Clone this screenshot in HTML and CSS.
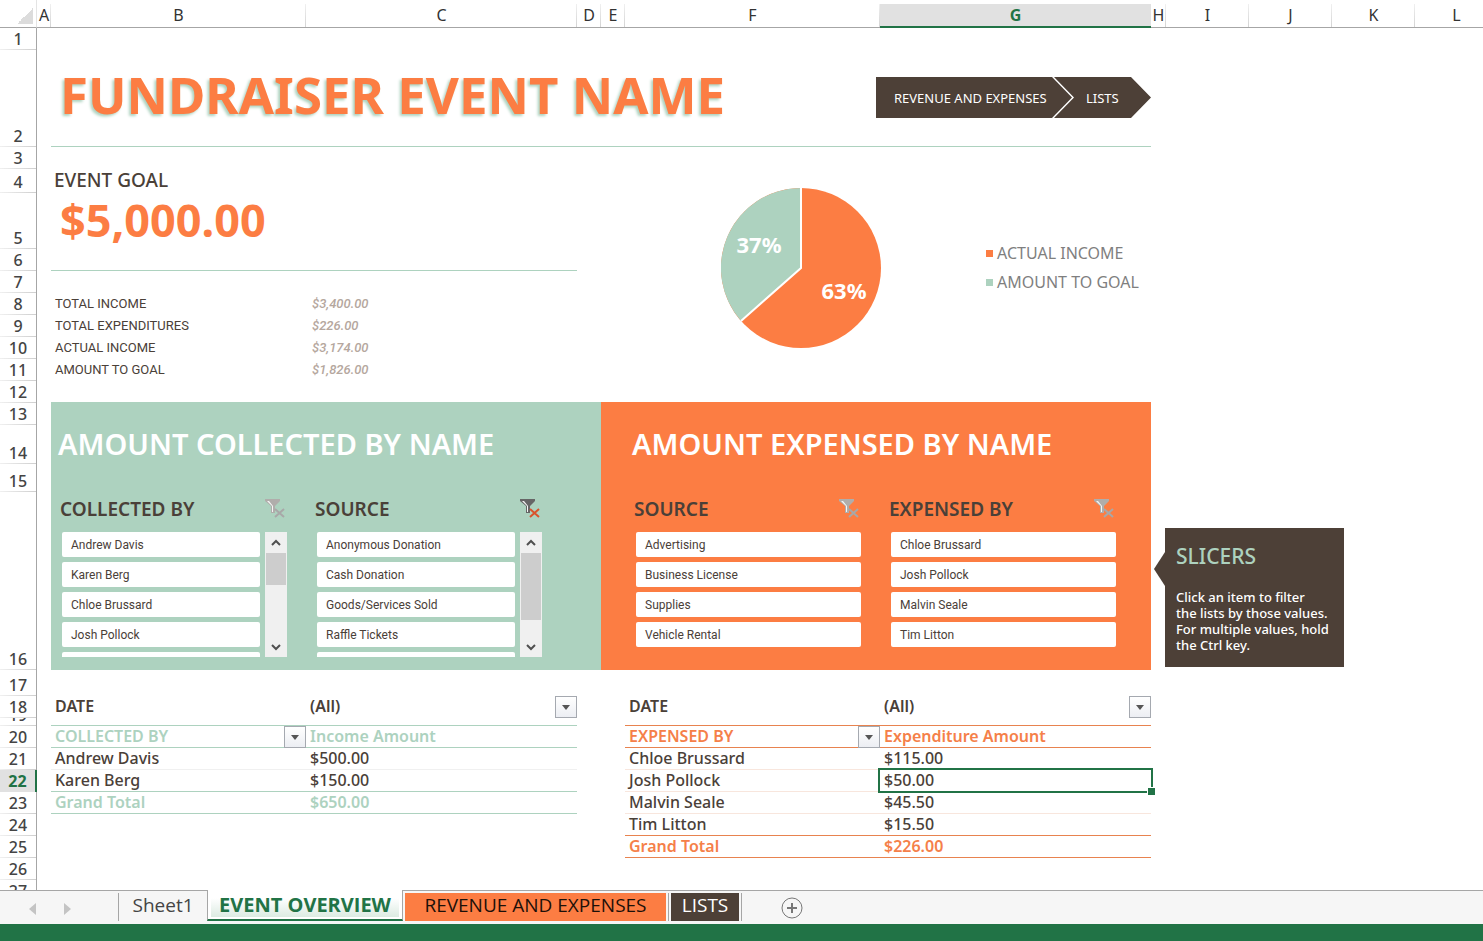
FILE: index.html
```html
<!DOCTYPE html>
<html lang="en">
<head>
    <meta charset="UTF-8">
    <meta name="viewport" content="width=device-width, initial-scale=1.0">
    <title>Fundraiser Event</title>
    <link rel="stylesheet" href="styles.css">
</head>
<body>
    <!-- Shared icons -->
    <svg class="sprite" aria-hidden="true">
        <symbol id="clear-filter" viewBox="0 0 20 20">
            <path class="funnel" d="M0 0h15v2l-5 5v7H6V7L0 2z"/>
            <path class="shine" d="M2 2l5 5v6h1V7L4 2z"/>
            <path class="cross" d="M10 10l9 8M19 10l-9 8"/>
        </symbol>
        <symbol id="chevron-up" viewBox="0 0 10 8">
            <path d="M1 6l4-4 4 4" fill="none" stroke="#505050" stroke-width="2"/>
        </symbol>
        <symbol id="chevron-down" viewBox="0 0 10 8">
            <path d="M1 2l4 4 4-4" fill="none" stroke="#505050" stroke-width="2"/>
        </symbol>
        <symbol id="drop-arrow" viewBox="0 0 8 5">
            <path d="M0 0h8L4 5z" fill="#555"/>
        </symbol>
    </svg>

    <main class="sheet">
        <!-- Column headings -->
        <div class="corner"></div>
        <div class="col-head">A</div>
        <div class="col-head">B</div>
        <div class="col-head">C</div>
        <div class="col-head">D</div>
        <div class="col-head">E</div>
        <div class="col-head">F</div>
        <div class="col-head selected">G</div>
        <div class="col-head">H</div>
        <div class="col-head">I</div>
        <div class="col-head">J</div>
        <div class="col-head">K</div>
        <div class="col-head">L</div>
        <div class="col-head"></div>

        <!-- Row headings -->
        <div class="row-head">1</div>
        <div class="row-head">2</div>
        <div class="row-head">3</div>
        <div class="row-head">4</div>
        <div class="row-head">5</div>
        <div class="row-head">6</div>
        <div class="row-head">7</div>
        <div class="row-head">8</div>
        <div class="row-head">9</div>
        <div class="row-head">10</div>
        <div class="row-head">11</div>
        <div class="row-head">12</div>
        <div class="row-head">13</div>
        <div class="row-head">14</div>
        <div class="row-head">15</div>
        <div class="row-head">16</div>
        <div class="row-head">17</div>
        <div class="row-head">18</div>
        <div class="row-head">19</div>
        <div class="row-head">20</div>
        <div class="row-head">21</div>
        <div class="row-head selected">22</div>
        <div class="row-head">23</div>
        <div class="row-head">24</div>
        <div class="row-head">25</div>
        <div class="row-head">26</div>
        <div class="row-head">27</div>

        <!-- Title -->
        <header class="title-row">
            <h1>FUNDRAISER EVENT NAME</h1>
            <nav class="steps">
                <a href="#revenue" class="step first">REVENUE AND EXPENSES</a>
                <a href="#lists" class="step last">LISTS</a>
            </nav>
        </header>

        <!-- Goal and totals -->
        <h2 class="goal-label">EVENT GOAL</h2>
        <div class="goal-value">$5,000.00</div>
        <div class="goal-line"></div>
        <dl class="totals">
            <dt>TOTAL INCOME</dt><dd>$3,400.00</dd>
            <dt>TOTAL EXPENDITURES</dt><dd>$226.00</dd>
            <dt>ACTUAL INCOME</dt><dd>$3,174.00</dd>
            <dt>AMOUNT TO GOAL</dt><dd>$1,826.00</dd>
        </dl>

        <!-- Chart -->
        <figure class="chart">
            <svg class="pie" viewBox="0 0 160 160" role="img" aria-label="Actual income and amount to goal">
                <circle cx="80" cy="80" r="80" fill="#fc7d43"/>
                <path d="M80 80V0A80 80 0 0 0 20 133z" fill="#add2bf"/>
                <path d="M80 0v80L20 133" fill="none" stroke="#fff" stroke-width="2"/>
                <text x="38" y="65">37%</text>
                <text x="123" y="111">63%</text>
            </svg>
            <ul class="legend">
                <li class="income">ACTUAL INCOME</li>
                <li class="remaining">AMOUNT TO GOAL</li>
            </ul>
        </figure>

        <!-- Slicer bands -->
        <div class="band green"></div>
        <div class="band orange"></div>
        <h2 class="band-title collected">AMOUNT COLLECTED BY NAME</h2>
        <h2 class="band-title expensed">AMOUNT EXPENSED BY NAME</h2>

        <section class="slicer col-b">
            <div class="slicer-head">
                <h3>COLLECTED BY</h3>
                <button class="clear" aria-label="Clear filter"><svg><use href="#clear-filter"/></svg></button>
            </div>
            <div class="slicer-body">
                <div class="items">
                    <button>Andrew Davis</button>
                    <button>Karen Berg</button>
                    <button>Chloe Brussard</button>
                    <button>Josh Pollock</button>
                    <button aria-hidden="true"></button>
                </div>
                <div class="scroll">
                    <button aria-label="Scroll up"><svg><use href="#chevron-up"/></svg></button>
                    <div class="track"><div class="thumb short"></div></div>
                    <button aria-label="Scroll down"><svg><use href="#chevron-down"/></svg></button>
                </div>
            </div>
        </section>

        <section class="slicer col-c">
            <div class="slicer-head">
                <h3>SOURCE</h3>
                <button class="clear active" aria-label="Clear filter"><svg><use href="#clear-filter"/></svg></button>
            </div>
            <div class="slicer-body">
                <div class="items">
                    <button>Anonymous Donation</button>
                    <button>Cash Donation</button>
                    <button>Goods/Services Sold</button>
                    <button>Raffle Tickets</button>
                    <button aria-hidden="true"></button>
                </div>
                <div class="scroll">
                    <button aria-label="Scroll up"><svg><use href="#chevron-up"/></svg></button>
                    <div class="track"><div class="thumb long"></div></div>
                    <button aria-label="Scroll down"><svg><use href="#chevron-down"/></svg></button>
                </div>
            </div>
        </section>

        <section class="slicer col-f">
            <div class="slicer-head">
                <h3>SOURCE</h3>
                <button class="clear" aria-label="Clear filter"><svg><use href="#clear-filter"/></svg></button>
            </div>
            <div class="slicer-body">
                <div class="items">
                    <button>Advertising</button>
                    <button>Business License</button>
                    <button>Supplies</button>
                    <button>Vehicle Rental</button>
                </div>
            </div>
        </section>

        <section class="slicer col-g">
            <div class="slicer-head">
                <h3>EXPENSED BY</h3>
                <button class="clear" aria-label="Clear filter"><svg><use href="#clear-filter"/></svg></button>
            </div>
            <div class="slicer-body">
                <div class="items">
                    <button>Chloe Brussard</button>
                    <button>Josh Pollock</button>
                    <button>Malvin Seale</button>
                    <button>Tim Litton</button>
                </div>
            </div>
        </section>

        <aside class="tip">
            <h3>SLICERS</h3>
            <p>Click an item to filter<br>the lists by those values.<br>For multiple values, hold<br>the Ctrl key.</p>
        </aside>

        <!-- Income pivot -->
        <div class="filter income-filter">
            <label for="income-date">DATE</label>
            <div class="picker">
                <select id="income-date"><option>(All)</option></select>
                <span class="drop"><svg><use href="#drop-arrow"/></svg></span>
            </div>
        </div>
        <table class="pivot income-pivot">
            <thead>
                <tr>
                    <th><div class="th-label">COLLECTED BY<button class="drop" aria-label="Filter names"><svg><use href="#drop-arrow"/></svg></button></div></th>
                    <th>Income Amount</th>
                </tr>
            </thead>
            <tbody>
                <tr><td>Andrew Davis</td><td>$500.00</td></tr>
                <tr><td>Karen Berg</td><td>$150.00</td></tr>
            </tbody>
            <tfoot>
                <tr><td>Grand Total</td><td>$650.00</td></tr>
            </tfoot>
        </table>

        <!-- Expense pivot -->
        <div class="filter expense-filter">
            <label for="expense-date">DATE</label>
            <div class="picker">
                <select id="expense-date"><option>(All)</option></select>
                <span class="drop"><svg><use href="#drop-arrow"/></svg></span>
            </div>
        </div>
        <table class="pivot expense-pivot">
            <thead>
                <tr>
                    <th><div class="th-label">EXPENSED BY<button class="drop" aria-label="Filter names"><svg><use href="#drop-arrow"/></svg></button></div></th>
                    <th>Expenditure Amount</th>
                </tr>
            </thead>
            <tbody>
                <tr><td>Chloe Brussard</td><td>$115.00</td></tr>
                <tr><td>Josh Pollock</td><td class="current">$50.00</td></tr>
                <tr><td>Malvin Seale</td><td>$45.50</td></tr>
                <tr><td>Tim Litton</td><td>$15.50</td></tr>
            </tbody>
            <tfoot>
                <tr><td>Grand Total</td><td>$226.00</td></tr>
            </tfoot>
        </table>
    </main>

    <!-- Sheet tabs -->
    <nav class="tabs">
        <div class="tab-scroll">
            <button aria-label="Previous sheet"><svg viewBox="0 0 7 12"><path d="M7 0v12L0 6z"/></svg></button>
            <button aria-label="Next sheet"><svg viewBox="0 0 7 12"><path d="M0 0v12l7-6z"/></svg></button>
        </div>
        <button class="tab plain">Sheet1</button>
        <button class="tab active">EVENT OVERVIEW</button>
        <button class="tab orange-tab">REVENUE AND EXPENSES</button>
        <button class="tab brown-tab">LISTS</button>
        <button class="add" aria-label="New sheet">
            <svg viewBox="0 0 22 22"><circle cx="11" cy="11" r="10"/><path class="plus" d="M11 6v10M6 11h10"/></svg>
        </button>
    </nav>
    <footer class="status"></footer>
</body>
</html>
```
FILE: styles.css
```css
* {
    box-sizing: border-box;
}

body {
    margin: 0;
    height: 100vh;
    display: flex;
    flex-direction: column;
    font-family: "Noto Sans", "Open Sans", sans-serif;
    font-size: 16px;
    font-weight: 500;
    color: #4a4038;
    background: #fff;
    overflow: hidden;
}

h1, h2, h3, p, dl, dd, ul, figure {
    margin: 0;
    padding: 0;
}

button, select {
    font: inherit;
    color: inherit;
    border: none;
    padding: 0;
    background: none;
}

.sprite {
    display: none;
}

/* Sheet grid */
.sheet {
    flex: 1;
    min-height: 0;
    overflow: hidden;
    display: grid;
    grid-template-columns: 37px 14px 255px 271px 24px 24px 255px 271px 15px 83px 83px 83px 83px 1fr;
    grid-template-rows: 28px 22px 97px 22px 24px 56px 22px 22px 22px 22px 22px 22px 22px 22px 39px 28px 178px 26px 22px 8px;
    grid-auto-rows: 22px;
}

.corner {
    grid-area: 1 / 1;
    border-right: 1px solid #e4e4e4;
    border-bottom: 1px solid #a6a6a6;
    background: linear-gradient(135deg, transparent 50%, #dcdcdc 50%) 17px 8px / 16px 16px no-repeat;
}

.col-head {
    grid-row: 1;
    padding-top: 4px;
    line-height: 22px;
    text-align: center;
    font-weight: 400;
    color: #333;
    border-bottom: 1px solid #a6a6a6;
    background: linear-gradient(#f0f0f0, #cfcfcf) right 4px / 1px 100% no-repeat;
}

.col-head.selected {
    font-weight: 700;
    color: #217346;
    border-bottom: 2px solid #217346;
    background: linear-gradient(#e1e1e1, #e1e1e1) 0 4px / 100% 100% no-repeat;
}

.row-head {
    grid-column: 1;
    display: flex;
    align-items: flex-end;
    justify-content: center;
    line-height: 22px;
    color: #444;
    overflow: hidden;
    border-right: 1px solid #a6a6a6;
    background: linear-gradient(90deg, #f0f0f0, #cfcfcf) 0 100% / 100% 1px no-repeat;
}

.row-head.selected {
    font-weight: 700;
    color: #217346;
    background: #e1e1e1;
    border-right: 2px solid #217346;
}

/* Title row */
.title-row {
    grid-area: 3 / 3 / 4 / 9;
    display: flex;
    align-items: center;
    justify-content: space-between;
    padding: 0 0 1px 9px;
    border-bottom: 1px solid #add2bf;
}

h1 {
    padding-bottom: 8px;
    font-size: 51px;
    line-height: 60px;
    color: #fc7d43;
    text-shadow: -2px 2px 3px #add2bf;
}

.steps {
    display: flex;
}

.step {
    height: 41px;
    display: flex;
    align-items: center;
    font-size: 13px;
    font-weight: 400;
    color: #fff;
    background: #4d4037;
    text-decoration: none;
}

.step.first {
    width: 196px;
    padding-left: 18px;
    clip-path: polygon(0 0, calc(100% - 20px) 0, 100% 50%, calc(100% - 20px) 100%, 0 100%);
}

.step.last {
    width: 97px;
    margin-left: -18px;
    padding-left: 32px;
    clip-path: polygon(0 0, calc(100% - 20px) 0, 100% 50%, calc(100% - 20px) 100%, 0 100%, 20px 50%);
}

/* Goal */
.goal-label {
    grid-area: 5 / 3;
    padding-left: 3px;
    font-size: 19px;
    line-height: 22px;
    font-weight: 500;
}

.goal-value {
    grid-area: 6 / 3;
    padding-left: 9px;
    font-size: 45px;
    line-height: 54px;
    font-weight: 700;
    color: #fc7d43;
}

.goal-line {
    grid-area: 7 / 3 / 8 / 5;
    border-bottom: 1px solid #add2bf;
}

.totals {
    grid-area: 9 / 3 / 13 / 5;
    display: grid;
    grid-template-columns: 255px 1fr;
    font-family: Roboto, sans-serif;
    font-size: 13px;
    font-weight: 400;
    line-height: 22px;
}

.totals dt {
    padding-left: 4px;
}

.totals dd {
    padding-left: 6px;
    font-style: italic;
    font-weight: 500;
    color: #b5a79e;
}

/* Chart */
.chart {
    grid-area: 4 / 7 / 13 / 9;
    display: flex;
    align-items: center;
    gap: 105px;
    padding: 8px 0 0 96px;
}

.pie {
    width: 160px;
    height: 160px;
}

.pie text {
    font-size: 22px;
    font-weight: 700;
    fill: #fff;
    text-anchor: middle;
}

.legend {
    list-style: none;
    line-height: 29px;
    font-weight: 400;
    color: #7f7f7f;
}

.legend li::before {
    content: "";
    display: inline-block;
    width: 7px;
    height: 7px;
    margin-right: 4px;
    vertical-align: 2px;
    background: #fc7d43;
}

.legend .remaining::before {
    background: #add2bf;
}

/* Bands behind the slicers */
.band {
    margin-top: -1px;
}

.band.green {
    grid-area: 14 / 3 / 18 / 6;
    background: #add2bf;
}

.band.orange {
    grid-area: 14 / 6 / 18 / 9;
    background: #fc7d43;
}

.band-title {
    padding-left: 7px;
    font-size: 29px;
    line-height: 38px;
    font-weight: 600;
    color: #fff;
}

.band-title.collected {
    grid-area: 15 / 3 / 16 / 6;
}

.band-title.expensed {
    grid-area: 15 / 7 / 16 / 9;
}

/* Slicers */
.slicer {
    width: 236px;
}

.col-b { grid-area: 17 / 3; }
.col-c { grid-area: 17 / 4; }
.col-f { grid-area: 17 / 7; }
.col-g { grid-area: 17 / 8; }

.slicer-head {
    display: flex;
    align-items: center;
    justify-content: space-between;
    height: 34px;
    margin-bottom: 6px;
    padding: 0 2px 0 9px;
}

.slicer-head h3 {
    font-size: 19px;
    font-weight: 600;
}

.clear {
    --cross: #a8a8a8;
    --shine: #f4f4f4;
}

.clear.active {
    --cross: #d9532c;
}

.clear svg {
    display: block;
    width: 20px;
    height: 20px;
    fill: #b0adab;
    stroke: none;
}

.clear.active svg {
    fill: #666;
}

.shine {
    fill: var(--shine);
}

.cross {
    stroke: var(--cross);
    stroke-width: 2;
}

.slicer-body {
    display: flex;
    gap: 5px;
    height: 125px;
    padding-left: 11px;
}

.items {
    flex: 1;
    display: flex;
    flex-direction: column;
    gap: 5px;
    overflow: hidden;
}

.items button {
    flex: none;
    height: 25px;
    padding-left: 9px;
    text-align: left;
    font-family: Roboto, sans-serif;
    font-size: 12px;
    font-weight: 400;
    background: #fff;
    border-radius: 2px;
}

.scroll {
    width: 22px;
    display: flex;
    flex-direction: column;
    padding: 0 1px;
    background: #f0f0f0;
}

.scroll button {
    height: 21px;
    display: flex;
    align-items: center;
    justify-content: center;
}

.scroll svg {
    width: 10px;
    height: 8px;
}

.track {
    flex: 1;
}

.thumb {
    background: #cdcdcd;
}

.thumb.short { height: 32px; }
.thumb.long { height: 67px; }

/* Callout */
.tip {
    position: relative;
    grid-area: 17 / 9 / 18 / 14;
    align-self: start;
    width: 179px;
    margin: 36px 0 0 14px;
    padding: 14px 11px;
    color: #fff;
    background: #4d4037;
}

.tip::before {
    content: "";
    position: absolute;
    left: -11px;
    top: 24px;
    width: 11px;
    height: 34px;
    background: #4d4037;
    clip-path: polygon(100% 0, 100% 100%, 0 50%);
}

.tip h3 {
    margin-bottom: 18px;
    font-size: 21px;
    line-height: 29px;
    font-weight: 500;
    color: #add2bf;
}

.tip p {
    font-size: 13px;
    line-height: 16px;
    white-space: nowrap;
}

/* Pivot filters */
.filter {
    display: flex;
    line-height: 20px;
    font-weight: 600;
    border-bottom: 1px solid #add2bf;
}

.filter label {
    width: 255px;
    padding-left: 4px;
}

.income-filter {
    grid-area: 19 / 3 / 21 / 5;
}

.expense-filter {
    grid-area: 19 / 7 / 21 / 9;
    border-color: #e8834f;
}

.picker {
    flex: 1;
    display: flex;
    height: 22px;
}

.picker select {
    flex: 1;
    height: 20px;
    padding-left: 4px;
    appearance: none;
}

.drop {
    flex: none;
    width: 22px;
    height: 22px;
    display: flex;
    align-items: center;
    justify-content: center;
    border: 1px solid #a5a9b0;
    background: linear-gradient(#fff, #eceef3);
}

.drop svg {
    width: 8px;
    height: 5px;
}

/* Pivot tables */
.pivot {
    align-self: start;
    width: 100%;
    table-layout: fixed;
    border-spacing: 0;
    line-height: 21px;
    text-align: left;
}

.pivot th, .pivot td {
    height: 22px;
    padding: 0 0 0 4px;
    border-bottom: 1px solid #f0f0f0;
}

.pivot th:first-child {
    width: 255px;
}

.pivot th, .pivot tfoot td {
    font-weight: 600;
}

.income-pivot {
    grid-area: 21 / 3 / 25 / 5;
}

.expense-pivot {
    grid-area: 21 / 7 / 27 / 9;
}

.expense-pivot tbody td {
    border-color: #f8e6dd;
}

.income-pivot th, .income-pivot tfoot td {
    color: #add2bf;
}

.expense-pivot th, .expense-pivot tfoot td {
    color: #f58049;
}

.income-pivot th, .income-pivot tfoot td, .income-pivot tbody tr:last-child td {
    border-color: #add2bf;
}

.expense-pivot th, .expense-pivot tfoot td, .expense-pivot tbody tr:last-child td {
    border-color: #e8834f;
}

.th-label {
    display: flex;
    justify-content: space-between;
    height: 21px;
}

.current {
    position: relative;
}

/* Selection frame and fill handle */
.current::before {
    content: "";
    position: absolute;
    inset: -2px -2px -2px -2px;
    border: 2px solid #217346;
}

.current::after {
    content: "";
    position: absolute;
    right: -4px;
    bottom: -4px;
    width: 7px;
    height: 7px;
    background: #217346;
    border: solid #fff;
    border-width: 1px 0 0 1px;
}

/* Sheet tabs */
.tabs {
    flex: none;
    display: flex;
    height: 34px;
    font-family: "Open Sans", "Noto Sans", sans-serif;
    font-size: 19px;
    font-weight: 400;
    color: #444;
    background: #f6f6f6;
    border-top: 1px solid #a6a6a6;
}

.tab-scroll {
    display: flex;
    gap: 28px;
    width: 118px;
    padding-left: 29px;
}

.tab-scroll button {
    width: 7px;
}

.tab-scroll svg {
    width: 7px;
    height: 12px;
    fill: #c4c4c4;
}

.tab {
    height: 28px;
    margin-top: 2px;
    padding-bottom: 4px;
    line-height: 24px;
}

.tab.plain {
    width: 89px;
    border-left: 1px solid #a6a6a6;
}

.tab.active {
    width: 196px;
    height: 31px;
    margin-top: -1px;
    padding-bottom: 0;
    font-size: 20px;
    font-weight: 700;
    color: #217346;
    background: linear-gradient(#fff 30%, #dcebe2) 3px 0 / 188px 27px no-repeat #fff;
    border: solid #a6a6a6;
    border-width: 0 1px 2px;
    border-bottom-color: #217346;
}

.tab.orange-tab {
    width: 261px;
    margin-left: 2px;
    color: #1c1009;
    background: #fc7d43;
}

.tab.brown-tab {
    width: 68px;
    margin-left: 5px;
    color: #fff;
    background: #4d4037;
    box-shadow: -2px 0 #f6f6f6, -3px 0 #a6a6a6, 2px 0 #f6f6f6, 3px 0 #a6a6a6;
}

.add {
    margin-left: 42px;
}

.add svg {
    display: block;
    width: 22px;
    height: 22px;
    fill: none;
    stroke: #777;
}

.plus {
    stroke-width: 2;
}

.status {
    flex: none;
    height: 17px;
    background: #217346;
}
```
